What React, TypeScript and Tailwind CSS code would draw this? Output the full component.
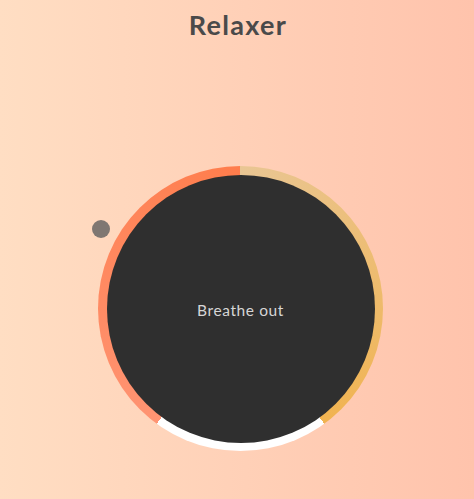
import React from "react";

export default function App() {
  return (
    <div className="w-full h-[499px] overflow-hidden bg-gradient-to-r from-[#ffdec3] to-[#ffc3ac] flex flex-col items-center font-['Lato','Noto_Sans',sans-serif]">
      <h1 className="mt-[8px] text-[27px] leading-[34px] font-bold text-[#4a4a4a] tracking-[1.3px] translate-x-[1px]">
        Relaxer
      </h1>
      <div className="relative mt-[124px] ml-[7px] w-[285px] h-[285px] rounded-full bg-[conic-gradient(#e9c694_0%,#f1b350_40%,#ffffff_40%,#ffffff_60%,#ff9473_60%,#ff7d4c_100%)] flex items-center justify-center">
        <div className="w-[268px] h-[268px] rounded-full bg-[#2f2f2f] flex items-center justify-center">
          <span className="text-[15.5px] text-[#d6d6d6] tracking-[0.6px] translate-y-[2px]">Breathe out</span>
        </div>
        <div className="absolute left-[-6px] top-[54px] w-[18px] h-[18px] rounded-full bg-[#7f7772]" />
      </div>
    </div>
  );
}
